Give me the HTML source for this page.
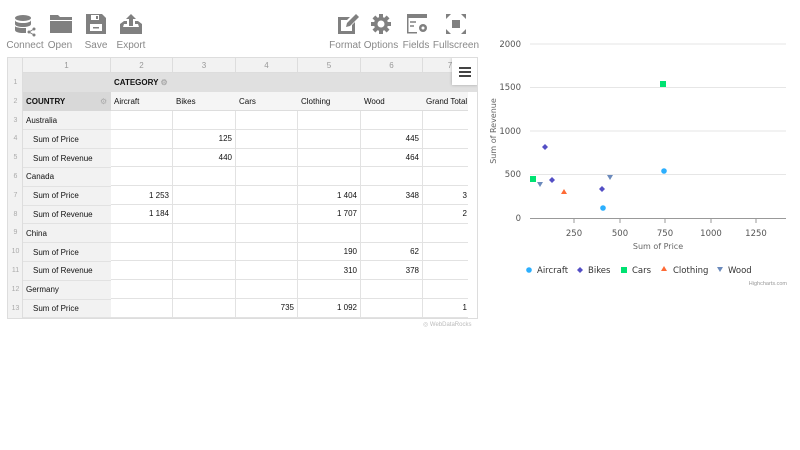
<!DOCTYPE html>
<html><head><meta charset="utf-8"><style>
*{margin:0;padding:0;box-sizing:border-box}
body{width:800px;height:450px;background:#fff;font-family:"Liberation Sans",sans-serif;position:relative;overflow:hidden;color:#111}
.lbl{position:absolute;top:40px;font-size:10px;color:#888;text-align:center;width:60px}
.ic{position:absolute;top:14px}
.a{position:absolute;font-size:8px;white-space:nowrap}
.c{position:absolute;border-right:1px solid #e2e2e2;border-bottom:1px solid #e2e2e2;font-size:8px;padding:0 3px;display:flex;align-items:center;overflow:hidden;white-space:nowrap}
.r{justify-content:flex-end}
.hdr{background:#f2f2f2;color:#999;justify-content:center;border-color:#ddd}
</style></head><body>

<svg class="ic" style="left:14px" width="22" height="24" viewBox="0 0 22 24"><g fill="#808080"><ellipse cx="9" cy="4" rx="8" ry="3"/><path d="M1 6v4c0 2 4 3 8 3s8-1 8-3V6c0 2-4 3-8 3S1 8 1 6z"/><path d="M1 12v4c0 2 4 3 8 3 1 0 2 0 3 0v-5c-1 0-2 0-3 0-4 0-8-1-8-2z"/><circle cx="20" cy="15" r="1.5"/><circle cx="15" cy="18" r="1.5"/><circle cx="20" cy="21" r="1.5"/></g><path d="M20 15L15 18L20 21" stroke="#808080" fill="none"/></svg>
<svg class="ic" style="left:50px" width="22" height="20" viewBox="0 0 22 20"><path d="M0 1h8l2 2h12v3H0z" fill="#808080"/><path d="M0 7h22v12H0z" fill="#808080"/></svg>
<svg class="ic" style="left:86px" width="20" height="20" viewBox="0 0 20 20"><path d="M0 0h16l4 4v16H0z" fill="#808080"/><rect x="5" y="1" width="8" height="5" fill="#fff"/><rect x="10" y="2" width="2" height="3" fill="#808080"/><rect x="4" y="10" width="12" height="7" fill="#fff"/><rect x="7" y="13" width="6" height="1.5" fill="#808080"/></svg>
<svg class="ic" style="left:120px" width="22" height="20" viewBox="0 0 22 20"><path d="M11 0l-5 5h3v7h4V5h3z" fill="#808080"/><path d="M0 10l4-3h3v3H4l-1 3h16l-1-3h-3V7h3l4 3v10H0z" fill="#808080"/></svg>
<div class="lbl" style="left:-5px">Connect</div>
<div class="lbl" style="left:30px">Open</div>
<div class="lbl" style="left:66px">Save</div>
<div class="lbl" style="left:101px">Export</div>

<svg class="ic" style="left:338px" width="22" height="20" viewBox="0 0 22 20"><path d="M0 3h12l-3 3H3v11h11v-6l3-3v12H0z" fill="#808080"/><path d="M18 0l3 3-9 9-4 1 1-4z" fill="#808080"/></svg>
<svg class="ic" style="left:371px" width="20" height="20" viewBox="0 0 20 20"><g fill="#808080"><circle cx="10" cy="10" r="7"/><rect x="8" y="0" width="4" height="20"/><rect x="0" y="8" width="20" height="4"/><rect x="8" y="0" width="4" height="20" transform="rotate(45 10 10)"/><rect x="8" y="0" width="4" height="20" transform="rotate(-45 10 10)"/></g><circle cx="10" cy="10" r="3.5" fill="#fff"/></svg>
<svg class="ic" style="left:407px" width="22" height="20" viewBox="0 0 22 20"><path d="M0 0h20v4H0z" fill="#808080"/><path d="M0 4h1.5v14H10v1.5H0z" fill="#808080"/><path d="M3 8h6M3 12h4" stroke="#808080" stroke-width="1.5"/><circle cx="16" cy="14" r="4" fill="#808080"/><circle cx="16" cy="14" r="1.5" fill="#fff"/></svg>
<svg class="ic" style="left:446px" width="20" height="20" viewBox="0 0 20 20"><g fill="#808080"><rect x="6" y="6" width="8" height="8"/><path d="M0 0h5L0 5zM20 0h-5l5 5zM0 20h5L0 15zM20 20h-5l5-5z"/></g></svg>
<div class="lbl" style="left:315px">Format</div>
<div class="lbl" style="left:351px">Options</div>
<div class="lbl" style="left:386px">Fields</div>
<div class="lbl" style="left:426px">Fullscreen</div>

<div style="position:absolute;left:7px;top:57px;width:471px;height:262px;border:1px solid #ddd;overflow:hidden;background:#fff">
<div style="position:absolute;left:0;top:0;width:470px;height:15px;background:#f2f2f2;border-bottom:1px solid #ddd"></div>
<div style="position:absolute;left:0;top:0;width:15px;height:262px;background:#f2f2f2;border-right:1px solid #ddd"></div>
<div class="c hdr" style="left:15px;top:0;width:88px;height:15px">1</div>
<div class="c hdr" style="left:103px;top:0;width:62px;height:15px">2</div>
<div class="c hdr" style="left:165px;top:0;width:63px;height:15px">3</div>
<div class="c hdr" style="left:228px;top:0;width:62px;height:15px">4</div>
<div class="c hdr" style="left:290px;top:0;width:63px;height:15px">5</div>
<div class="c hdr" style="left:353px;top:0;width:62px;height:15px">6</div>
<div class="c hdr" style="left:415px;top:0;width:55px;height:15px">7</div>
<div style="position:absolute;left:15px;top:15px;width:455px;height:19px;background:#e0e0e0"></div>
<div class="a" style="left:106px;top:20px;font-weight:bold">CATEGORY <span style="color:#aaa">⚙</span></div>
<div style="position:absolute;left:15px;top:34px;width:88px;height:19px;background:#d8d8d8"></div>
<div class="a" style="left:18px;top:39px;font-weight:bold">COUNTRY</div>
<div class="a" style="left:92px;top:39px;color:#aaa">⚙</div>
<div style="position:absolute;left:15px;top:53px;width:88px;height:209px;background:#f2f2f2"></div>
<div style="position:absolute;left:103px;top:34px;width:357px;height:19px;background:#f5f5f5;border-bottom:1px solid #ddd"></div>
<div class="a" style="left:106px;top:39px">Aircraft</div>
<div class="a" style="left:168px;top:39px">Bikes</div>
<div class="a" style="left:231px;top:39px">Cars</div>
<div class="a" style="left:293px;top:39px">Clothing</div>
<div class="a" style="left:356px;top:39px">Wood</div>
<div class="a" style="left:418px;top:39px">Grand Total</div>
<div id="rows"></div>
<div style="position:absolute;left:444px;top:0;width:26px;height:27px;background:#fff;box-shadow:0 0 3px rgba(0,0,0,.25)"><div style="position:absolute;left:7px;top:9px;width:12px;height:1.5px;background:#444;box-shadow:0 4px 0 #444,0 8px 0 #444"></div></div>
</div>
<div class="a" style="left:423px;top:321px;font-size:6px;color:#bbb">◎ WebDataRocks</div>

<script>
var data=[["Australia"],["Sum of Price","","125","","","445",""],["Sum of Revenue","","440","","","464",""],["Canada"],["Sum of Price","1 253","","","1 404","348","3"],["Sum of Revenue","1 184","","","1 707","","2"],["China"],["Sum of Price","","","","190","62",""],["Sum of Revenue","","","","310","378",""],["Germany"],["Sum of Price","","","735","1 092","","1"]];
var L=[103,165,228,290,353,415],W=[62,63,62,63,62,45];
var h="";
for(var n=1;n<=13;n++){var t=15+(n-1)*18.8;h+='<div class="a" style="left:0;width:15px;text-align:center;top:'+(t+6)+'px;color:#aaa;font-size:7px">'+n+'</div>';}
data.forEach(function(r,i){var t=53+i*18.8;var sub=r.length>1;
h+='<div class="a" style="left:'+(sub?25:18)+'px;top:'+(t+5)+'px">'+r[0]+'</div>';
for(var j=0;j<6;j++){h+='<div class="c r" style="left:'+L[j]+'px;top:'+t+'px;width:'+W[j]+'px;height:18.8px;'+(j==5?'border-right:none;padding-right:1px':'')+'">'+(sub?r[j+1]:'')+'</div>';}
h+='<div style="position:absolute;left:15px;top:'+(t+18.3)+'px;width:88px;height:1px;background:#e2e2e2"></div>';});
document.getElementById('rows').innerHTML=h;
</script>

<svg style="position:absolute;left:480px;top:30px" width="320" height="270">
<g stroke="#e6e6e6"><line x1="50" y1="14" x2="306" y2="14"/><line x1="50" y1="57.5" x2="306" y2="57.5"/><line x1="50" y1="101" x2="306" y2="101"/><line x1="50" y1="144.5" x2="306" y2="144.5"/></g>
<line x1="50" y1="188.5" x2="306" y2="188.5" stroke="#999"/>
<g stroke="#999"><line x1="94" y1="189" x2="94" y2="193"/><line x1="140" y1="189" x2="140" y2="193"/><line x1="185" y1="189" x2="185" y2="193"/><line x1="231" y1="189" x2="231" y2="193"/><line x1="276" y1="189" x2="276" y2="193"/></g>
<g font-family="DejaVu Sans,Liberation Sans,sans-serif" font-size="8.5" fill="#555" text-anchor="end"><text x="41" y="17">2000</text><text x="41" y="60">1500</text><text x="41" y="104">1000</text><text x="41" y="147">500</text><text x="41" y="191">0</text></g>
<g font-family="DejaVu Sans,Liberation Sans,sans-serif" font-size="8.5" fill="#555" text-anchor="middle"><text x="94" y="206">250</text><text x="140" y="206">500</text><text x="185" y="206">750</text><text x="231" y="206">1000</text><text x="276" y="206">1250</text><text x="178" y="219" fill="#666" font-size="8">Sum of Price</text><text transform="translate(16,101) rotate(-90)" fill="#666" font-size="8">Sum of Revenue</text></g>
<circle cx="184" cy="141" r="2.8" fill="#2caffe"/><circle cx="123" cy="178" r="2.8" fill="#2caffe"/>
<g fill="#544fc5"><path d="M65 114l3 3-3 3-3-3z"/><path d="M72 147l3 3-3 3-3-3z"/><path d="M122 156l3 3-3 3-3-3z"/></g>
<rect x="180" y="51" width="6" height="6" fill="#00e272"/><rect x="50" y="146" width="6" height="6" fill="#00e272"/>
<path d="M84 159l3 5h-6z" fill="#fe6a35"/>
<g fill="#6b8abc"><path d="M57 152h6l-3 5z"/><path d="M127 145h6l-3 5z"/></g>
<g font-family="DejaVu Sans,Liberation Sans,sans-serif" font-size="8.5" fill="#333"><circle cx="49" cy="240" r="2.8" fill="#2caffe"/><text x="57" y="243">Aircraft</text><path d="M100 237l3 3-3 3-3-3z" fill="#544fc5"/><text x="108" y="243">Bikes</text><rect x="141" y="237" width="6" height="6" fill="#00e272"/><text x="152" y="243">Cars</text><path d="M184 236l3 5h-6z" fill="#fe6a35"/><text x="193" y="243">Clothing</text><path d="M237 237h6l-3 5z" fill="#6b8abc"/><text x="248" y="243">Wood</text></g>
<text x="307" y="255" text-anchor="end" font-family="Liberation Sans,sans-serif" font-size="5.5" fill="#999">Highcharts.com</text>
</svg>
</body></html>
